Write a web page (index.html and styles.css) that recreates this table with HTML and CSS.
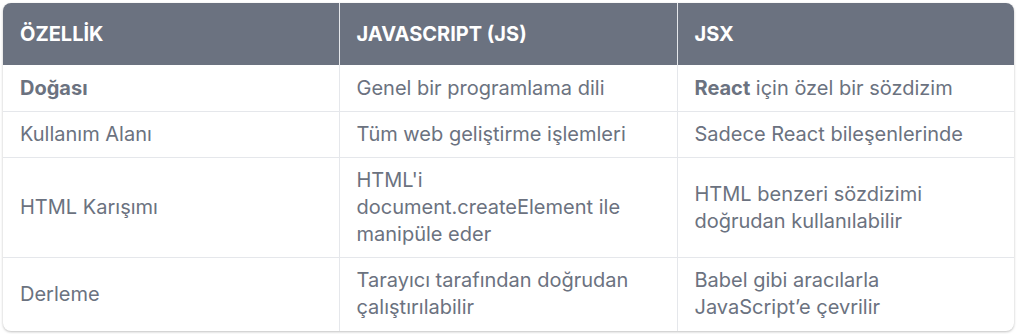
FILE: index.html
```html
<!DOCTYPE html>
<html lang="tr">
<head>
<meta charset="utf-8">
<link rel="stylesheet" href="styles.css">
</head>
<body>
<div class="card">
<table class="cmp">
<thead>
<tr><th>ÖZELLİK</th><th>JAVASCRIPT (JS)</th><th>JSX</th></tr>
</thead>
<tbody>
<tr><td><strong>Doğası</strong></td><td>Genel bir programlama dili</td><td><strong>React</strong> için özel bir sözdizim</td></tr>
<tr><td>Kullanım Alanı</td><td>Tüm web geliştirme işlemleri</td><td>Sadece React bileşenlerinde</td></tr>
<tr><td>HTML Karışımı</td><td>HTML'i document.createElement ile manipüle eder</td><td>HTML benzeri sözdizimi doğrudan kullanılabilir</td></tr>
<tr><td>Derleme</td><td>Tarayıcı tarafından doğrudan çalıştırılabilir</td><td>Babel gibi aracılarla JavaScript’e çevrilir</td></tr>
</tbody>
</table>
</div>
</body>
</html>
```
FILE: styles.css
```css
html, body { margin: 0; padding: 0; background: #ffffff; }
body { padding: 3px; font-family: Inter, "Noto Sans", sans-serif; }
.card {
  width: 1011px;
  border-radius: 8px;
  overflow: hidden;
  box-shadow: 0 1px 3px rgba(0,0,0,0.18), 0 1px 2px rgba(0,0,0,0.08);
  background: #fff;
}
.cmp {
  width: 100%;
  border-collapse: collapse;
  table-layout: fixed;
  font-size: 20px;
  line-height: 27px;
  color: #6b7280;
}
.cmp th, .cmp td { box-sizing: border-box; }
.cmp th {
  background: #6b7280;
  color: #fff;
  font-weight: 700;
  text-align: left;
  padding: 18px 17px 17px;
  border-left: 1px solid #e5e7eb;
}
.cmp td {
  padding: 9px 17px;
  border-left: 1px solid #e5e7eb;
  border-top: 1px solid #e5e7eb;
  vertical-align: middle;
}
.cmp th:first-child, .cmp td:first-child { border-left: 0; }
.cmp tbody tr:first-child td { border-top: 0; padding-top: 10px; }
.cmp tbody tr:last-child td { padding-bottom: 10px; }
.cmp th:nth-child(1) { width: 336px; }
.cmp th:nth-child(2) { width: 338px; }
.cmp strong { font-weight: 700; }
```
